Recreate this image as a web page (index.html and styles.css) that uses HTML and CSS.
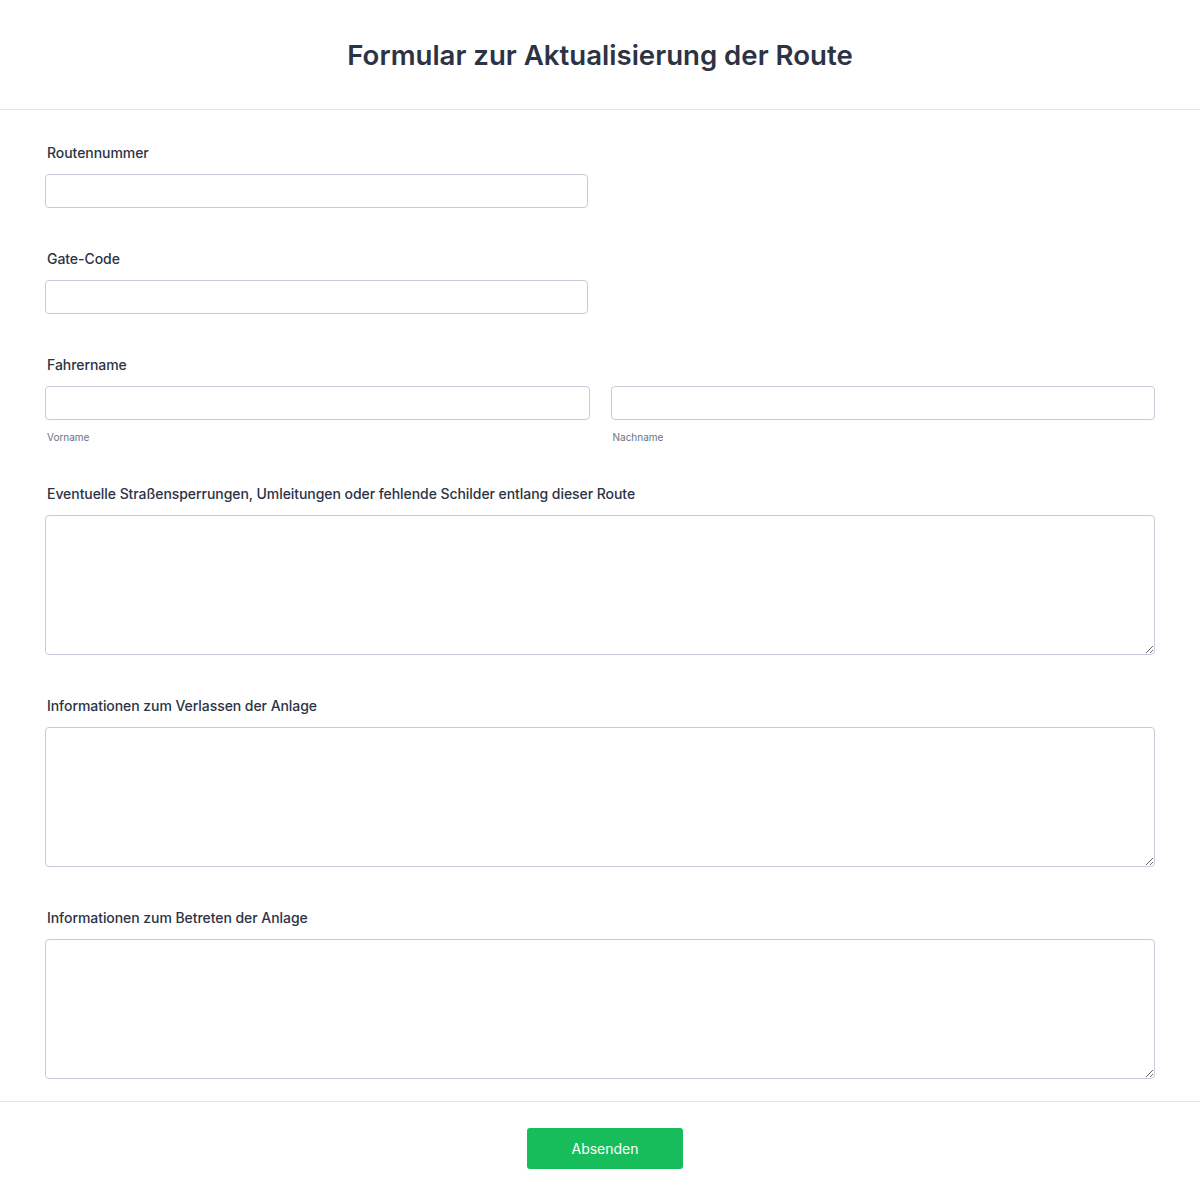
FILE: index.html
```html
<!DOCTYPE html>
<html lang="de">
<head>
<meta charset="utf-8">
<title>Formular zur Aktualisierung der Route</title>
<link rel="stylesheet" href="styles.css">
</head>
<body>
<header class="header">
  <h1 class="title">Formular zur Aktualisierung der Route</h1>
</header>
<form class="form">
  <div class="field">
    <label class="label">Routennummer</label>
    <input class="input input-half" type="text">
  </div>
  <div class="field">
    <label class="label">Gate-Code</label>
    <input class="input input-half" type="text">
  </div>
  <div class="field">
    <label class="label">Fahrername</label>
    <div class="name-row">
      <div class="name-col">
        <input class="input" type="text">
        <span class="sublabel">Vorname</span>
      </div>
      <div class="name-col">
        <input class="input" type="text">
        <span class="sublabel">Nachname</span>
      </div>
    </div>
  </div>
  <div class="field">
    <label class="label">Eventuelle Straßensperrungen, Umleitungen oder fehlende Schilder entlang dieser Route</label>
    <textarea class="textarea"></textarea>
  </div>
  <div class="field">
    <label class="label">Informationen zum Verlassen der Anlage</label>
    <textarea class="textarea"></textarea>
  </div>
  <div class="field">
    <label class="label">Informationen zum Betreten der Anlage</label>
    <textarea class="textarea"></textarea>
  </div>
</form>
<footer class="footer">
  <button class="submit" type="button">Absenden</button>
</footer>
</body>
</html>
```
FILE: styles.css
```css
* { box-sizing: border-box; }
html, body { margin: 0; padding: 0; background: #ffffff; }
body {
  font-family: Inter, "Noto Sans", "Liberation Sans", sans-serif;
  color: #2c3345;
}
.header {
  height: 110px;
  border-bottom: 1px solid #e3e5ec;
  display: flex;
  align-items: center;
  justify-content: center;
}
.title {
  margin: 0;
  font-size: 27.6px;
  font-weight: 600;
  line-height: 34px;
  color: #2c3345;
  padding-top: 1px;
}
.form {
  padding: 33px 45px 22px 45px;
  display: flex;
  flex-direction: column;
  gap: 41px;
}
.field {
  display: flex;
  flex-direction: column;
}
.label {
  display: block;
  font-size: 14px;
  font-weight: 500;
  line-height: 20px;
  letter-spacing: -0.06px;
  padding-left: 2px;
  margin-bottom: 11px;
  color: #2c3345;
}
.input {
  display: block;
  width: 100%;
  height: 34px;
  border: 1px solid #c8ccd9;
  border-radius: 4px;
  background: #fff;
  font-family: inherit;
  margin: 0;
  padding: 0 10px;
}
.input-half { width: 543px; }
.name-row {
  display: flex;
  gap: 21px;
}
.name-col {
  flex: 1;
  display: flex;
  flex-direction: column;
}
.sublabel {
  font-size: 10px;
  line-height: 12px;
  color: #6c7280;
  padding-left: 2px;
  margin-top: 11px;
}
.textarea {
  display: block;
  width: 100%;
  height: 140px;
  border: 1px solid #c8ccd9;
  border-radius: 4px;
  background: #fff;
  font-family: inherit;
  margin: 0;
  padding: 8px 10px;
}
.footer {
  border-top: 1px solid #e3e5ec;
  display: flex;
  justify-content: center;
  padding: 26px 0 35px 0;
}
.submit {
  width: 156px;
  height: 41px;
  border: none;
  border-radius: 3px;
  background: #18bd5b;
  color: #ffffff;
  font-family: inherit;
  font-size: 14px;
  font-weight: 400;
  margin-left: 10px;
  cursor: pointer;
}
```
